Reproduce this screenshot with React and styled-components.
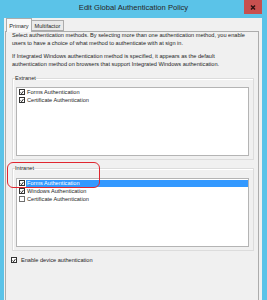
import React from "react";
import styled, { createGlobalStyle } from "styled-components";

const Global = createGlobalStyle`
  html, body { margin: 0; padding: 0; background: #5bc3e8; overflow: hidden; }
  * { box-sizing: border-box; }
`;

const Window = styled.div`
  position: relative;
  width: 267px;
  height: 300px;
  background: #5bc3e8;
  display: flex;
  flex-direction: column;
  font-family: "Liberation Sans", Arial, sans-serif;
  color: #1e1e1e;
`;

const TitleBar = styled.div`
  height: 18px;
  flex: none;
  display: grid;
  grid-template-columns: 1fr auto 1fr;
  align-items: start;
`;

const Title = styled.div`
  grid-column: 2;
  font-size: 7.6px;
  line-height: 16px;
  color: #262626;
  white-space: nowrap;
`;

const CloseButton = styled.div`
  grid-column: 3;
  justify-self: end;
  margin-right: 5px;
  width: 18px;
  height: 14px;
  background: #c7504f;
  display: flex;
  align-items: center;
  justify-content: center;
`;

const Client = styled.div`
  flex: 1;
  margin: 0 5px 0 4px;
  background: #f0f0f0;
  padding: 0 3px 0 1px;
  display: flex;
  flex-direction: column;
  min-height: 0;
`;

const TabStrip = styled.div`
  display: flex;
  align-items: flex-end;
  height: 13px;
  padding-left: 1px;
  position: relative;
  z-index: 1;
`;

const Tab = styled.div`
  font-size: 5.6px;
  white-space: nowrap;
  display: flex;
  align-items: center;
  justify-content: center;
  border: 1px solid #acacac;
  border-bottom: ${(p) => (p.$active ? "none" : "1px solid #acacac")};
  background: ${(p) => (p.$active ? "#f8f8f8" : "#eaeaea")};
  width: ${(p) => p.$w}px;
  height: ${(p) => (p.$active ? 14 : 11)}px;
  margin-bottom: ${(p) => (p.$active ? -1 : 0)}px;
  margin-left: ${(p) => (p.$active ? 0 : -1)}px;
  padding-top: ${(p) => (p.$active ? 0 : 1)}px;
`;

const Panel = styled.div`
  flex: 1;
  border: 1px solid #acacac;
  border-bottom: none;
  background: #f0f0f0;
  padding: 0 4px 0 6px;
  display: flex;
  flex-direction: column;
`;

const Para = styled.p`
  margin: ${(p) => p.$top}px 0 0;
  font-size: 5.6px;
  line-height: 8px;
  white-space: nowrap;
`;

const Group = styled.fieldset`
  margin: ${(p) => p.$top}px 0 0;
  padding: 0 4px 3px 3px;
  border: 1px solid #dcdcdc;
  box-shadow: inset 1px 1px 0 #fff;
  min-width: 0;
`;

const Legend = styled.legend`
  font-size: 5.6px;
  line-height: 8px;
  padding: 0;
  margin-left: -1px;
`;

const ListBox = styled.div`
  margin-top: ${(p) => p.$gap}px;
  height: 69px;
  background: #fff;
  border: 1px solid #b4b4b4;
`;

const Row = styled.div`
  display: flex;
  align-items: center;
  height: 8px;
  padding-left: 2px;
`;

const Box = styled.span`
  flex: none;
  width: 6px;
  height: 6px;
  border: 1px solid ${(p) => (p.$checked ? "#333" : "#707070")};
  background: #fff;
  display: flex;
  align-items: center;
  justify-content: center;
`;

const Label = styled.span`
  flex: ${(p) => (p.$selected ? 1 : "none")};
  margin-left: 1px;
  padding-left: 1px;
  font-size: 5.6px;
  line-height: 7px;
  white-space: nowrap;
  background: ${(p) => (p.$selected ? "#3399ff" : "transparent")};
  color: ${(p) => (p.$selected ? "#fff" : "#1e1e1e")};
`;

const DeviceRow = styled.div`
  display: flex;
  align-items: center;
  height: 8px;
  margin: 5px 0 0 -1px;
  gap: 4px;
`;

const DeviceLabel = styled.span`
  font-size: 5.6px;
  white-space: nowrap;
`;

const Callout = styled.div`
  position: absolute;
  left: 7px;
  top: 162px;
  width: 93px;
  height: 26px;
  border: 1.5px solid #e0262f;
  border-radius: 6px;
  pointer-events: none;
`;

const Check = () => (
  <svg width="5" height="5" viewBox="0 0 10 10">
    <path d="M1.5 5 L4 8 L8.5 1.5" fill="none" stroke="#111" strokeWidth="2.2" />
  </svg>
);

const CheckItem = ({ checked, selected, children }) => (
  <Row>
    <Box $checked={checked}>{checked && <Check />}</Box>
    <Label $selected={selected}>{children}</Label>
  </Row>
);

export default function App() {
  return (
    <>
      <Global />
      <Window>
        <TitleBar>
          <Title>Edit Global Authentication Policy</Title>
          <CloseButton>
            <svg width="6" height="5" viewBox="0 0 12 10">
              <path d="M2 1 L10 9 M10 1 L2 9" stroke="#2a1010" strokeWidth="2.8" />
            </svg>
          </CloseButton>
        </TitleBar>
        <Client>
          <TabStrip>
            <Tab $active $w={26}>Primary</Tab>
            <Tab $w={33}>Multifactor</Tab>
          </TabStrip>
          <Panel>
            <Para $top={-1}>
              Select authentication methods. By selecting more than one authentication method, you enable
              <br />
              users to have a choice of what method to authenticate with at sign in.
            </Para>
            <Para $top={5}>
              If Integrated Windows authentication method is specified, it appears as the default
              <br />
              authentication method on browsers that support Integrated Windows authentication.
            </Para>
            <Group $top={6}>
              <Legend>Extranet</Legend>
              <ListBox $gap={5}>
                <CheckItem checked>Forms Authentication</CheckItem>
                <CheckItem checked>Certificate Authentication</CheckItem>
              </ListBox>
            </Group>
            <Group $top={4}>
              <Legend>Intranet</Legend>
              <ListBox $gap={6}>
                <CheckItem checked selected>Forms Authentication</CheckItem>
                <CheckItem checked>Windows Authentication</CheckItem>
                <CheckItem>Certificate Authentication</CheckItem>
              </ListBox>
            </Group>
            <DeviceRow>
              <Box $checked>
                <Check />
              </Box>
              <DeviceLabel>Enable device authentication</DeviceLabel>
            </DeviceRow>
          </Panel>
        </Client>
        <Callout />
      </Window>
    </>
  );
}
